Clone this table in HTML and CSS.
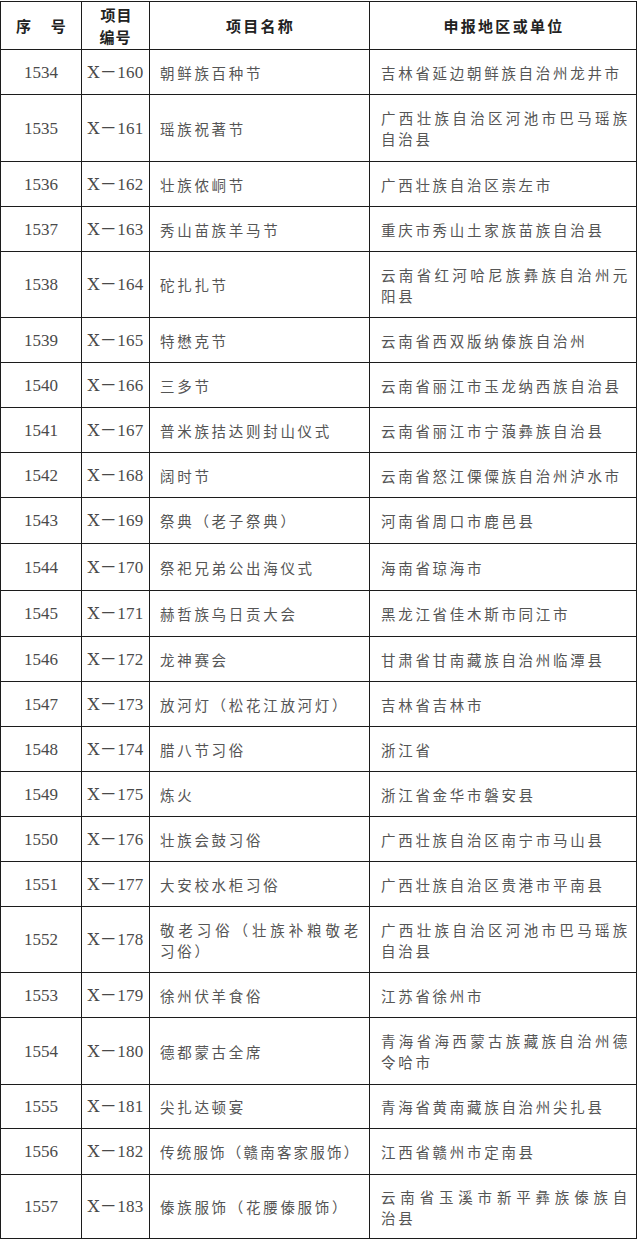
FILE: index.html
```html
<!DOCTYPE html>
<html lang="zh-CN">
<head>
<meta charset="utf-8">
<title>项目名录</title>
<link rel="stylesheet" href="styles.css">
</head>
<body>
<table class="tbl">
  <colgroup>
    <col class="c1"><col class="c2"><col class="c3"><col class="c4">
  </colgroup>
  <thead>
    <tr class="h48">
      <th class="hd">序　号</th>
      <th class="hd two">项目<br>编号</th>
      <th class="hd">项目名称</th>
      <th class="hd">申报地区或单位</th>
    </tr>
  </thead>
  <tbody>
    <tr class="h45"><td class="no">1534</td><td class="code">Ⅹ－160</td><td class="nm">朝鲜族百种节</td><td class="rg">吉林省延边朝鲜族自治州龙井市</td></tr>
    <tr class="h67"><td class="no">1535</td><td class="code">Ⅹ－161</td><td class="nm">瑶族祝著节</td><td class="rg">广西壮族自治区河池市巴马瑶族自治县</td></tr>
    <tr class="h45"><td class="no">1536</td><td class="code">Ⅹ－162</td><td class="nm">壮族侬峒节</td><td class="rg">广西壮族自治区崇左市</td></tr>
    <tr class="h45"><td class="no">1537</td><td class="code">Ⅹ－163</td><td class="nm">秀山苗族羊马节</td><td class="rg">重庆市秀山土家族苗族自治县</td></tr>
    <tr class="h66"><td class="no">1538</td><td class="code">Ⅹ－164</td><td class="nm">砣扎扎节</td><td class="rg">云南省红河哈尼族彝族自治州元阳县</td></tr>
    <tr class="h45"><td class="no">1539</td><td class="code">Ⅹ－165</td><td class="nm">特懋克节</td><td class="rg">云南省西双版纳傣族自治州</td></tr>
    <tr class="h45"><td class="no">1540</td><td class="code">Ⅹ－166</td><td class="nm">三多节</td><td class="rg">云南省丽江市玉龙纳西族自治县</td></tr>
    <tr class="h45"><td class="no">1541</td><td class="code">Ⅹ－167</td><td class="nm">普米族拮达则封山仪式</td><td class="rg">云南省丽江市宁蒗彝族自治县</td></tr>
    <tr class="h45"><td class="no">1542</td><td class="code">Ⅹ－168</td><td class="nm">阔时节</td><td class="rg">云南省怒江傈僳族自治州泸水市</td></tr>
    <tr class="h46"><td class="no">1543</td><td class="code">Ⅹ－169</td><td class="nm">祭典（老子祭典）</td><td class="rg">河南省周口市鹿邑县</td></tr>
    <tr class="h47"><td class="no">1544</td><td class="code">Ⅹ－170</td><td class="nm">祭祀兄弟公出海仪式</td><td class="rg">海南省琼海市</td></tr>
    <tr class="h46"><td class="no">1545</td><td class="code">Ⅹ－171</td><td class="nm">赫哲族乌日贡大会</td><td class="rg">黑龙江省佳木斯市同江市</td></tr>
    <tr class="h45"><td class="no">1546</td><td class="code">Ⅹ－172</td><td class="nm">龙神赛会</td><td class="rg">甘肃省甘南藏族自治州临潭县</td></tr>
    <tr class="h45"><td class="no">1547</td><td class="code">Ⅹ－173</td><td class="nm">放河灯（松花江放河灯）</td><td class="rg">吉林省吉林市</td></tr>
    <tr class="h45"><td class="no">1548</td><td class="code">Ⅹ－174</td><td class="nm">腊八节习俗</td><td class="rg">浙江省</td></tr>
    <tr class="h45"><td class="no">1549</td><td class="code">Ⅹ－175</td><td class="nm">炼火</td><td class="rg">浙江省金华市磐安县</td></tr>
    <tr class="h45"><td class="no">1550</td><td class="code">Ⅹ－176</td><td class="nm">壮族会鼓习俗</td><td class="rg">广西壮族自治区南宁市马山县</td></tr>
    <tr class="h45"><td class="no">1551</td><td class="code">Ⅹ－177</td><td class="nm">大安校水柜习俗</td><td class="rg">广西壮族自治区贵港市平南县</td></tr>
    <tr class="h66"><td class="no">1552</td><td class="code">Ⅹ－178</td><td class="nm">敬老习俗（壮族补粮敬老习俗）</td><td class="rg">广西壮族自治区河池市巴马瑶族自治县</td></tr>
    <tr class="h45"><td class="no">1553</td><td class="code">Ⅹ－179</td><td class="nm">徐州伏羊食俗</td><td class="rg">江苏省徐州市</td></tr>
    <tr class="h67"><td class="no">1554</td><td class="code">Ⅹ－180</td><td class="nm">德都蒙古全席</td><td class="rg">青海省海西蒙古族藏族自治州德令哈市</td></tr>
    <tr class="h44"><td class="no">1555</td><td class="code">Ⅹ－181</td><td class="nm">尖扎达顿宴</td><td class="rg">青海省黄南藏族自治州尖扎县</td></tr>
    <tr class="h46"><td class="no">1556</td><td class="code">Ⅹ－182</td><td class="nm nw">传统服饰（赣南客家服饰）</td><td class="rg">江西省赣州市定南县</td></tr>
    <tr class="h64"><td class="no">1557</td><td class="code">Ⅹ－183</td><td class="nm">傣族服饰（花腰傣服饰）</td><td class="rg"><span class="jl">云南省玉溪市新平彝族傣族自</span>治县</td></tr>
  </tbody>
</table>
</body>
</html>
```
FILE: styles.css
```css
html, body {
  margin: 0;
  padding: 0;
  background: #ffffff;
}

.tbl {
  border-collapse: collapse;
  table-layout: fixed;
  width: 637px;
  margin-top: 1px;
  font-family: "Noto Sans CJK SC", sans-serif;
  color: #555555;
}

.c1 { width: 81px; }
.c2 { width: 68px; }
.c3 { width: 220px; }
.c4 { width: 267px; }

.tbl th,
.tbl td {
  border: 1px solid #1c1c1c;
  padding: 0;
  vertical-align: middle;
}

.h44 { height: 44px; }
.h45 { height: 45px; }
.h46 { height: 46px; }
.h47 { height: 47px; }
.h48 { height: 48px; }
.h64 { height: 64px; }
.h66 { height: 66px; }
.h67 { height: 67px; }

.tbl .hd {
  font-size: 15px;
  font-weight: 700;
  color: #222222;
  letter-spacing: 2.3px;
  text-indent: 2px;
  line-height: 22px;
  text-align: center;
}

.tbl .hd.two {
  letter-spacing: 1px;
}

.tbl .no {
  font-family: "Liberation Serif", "Noto Sans CJK SC", serif;
  font-size: 17px;
  color: #4a4a4a;
  text-align: center;
  line-height: 21px;
}

.tbl .code {
  font-family: "Liberation Serif", "DejaVu Serif", "Noto Sans CJK SC", serif;
  font-size: 17px;
  color: #4a4a4a;
  text-align: center;
  white-space: nowrap;
  letter-spacing: 0.3px;
  line-height: 21px;
}

.tbl .nm,
.tbl .rg {
  font-size: 14.5px;
  letter-spacing: 2.7px;
  line-height: 21px;
  text-align: justify;
}

.tbl .nm {
  padding: 0 8px 0 10px;
}

.tbl .rg {
  padding: 0 6px 0 11px;
}

.tbl .nw {
  white-space: nowrap;
  letter-spacing: 2.2px;
}

.jl {
  display: block;
  text-align: justify;
  text-align-last: justify;
}
```
